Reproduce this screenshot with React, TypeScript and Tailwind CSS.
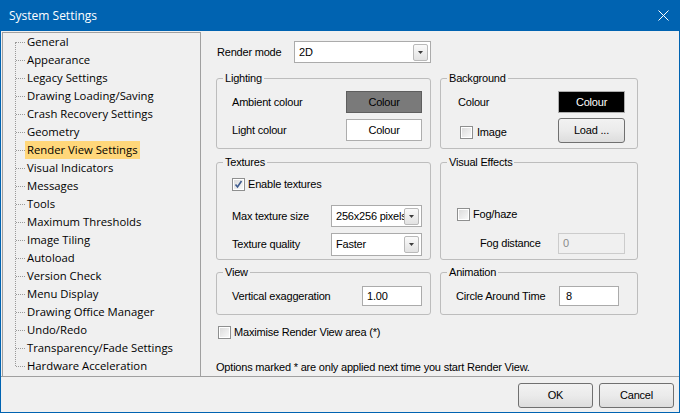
const treeItems = [
  "General",
  "Appearance",
  "Legacy Settings",
  "Drawing Loading/Saving",
  "Crash Recovery Settings",
  "Geometry",
  "Render View Settings",
  "Visual Indicators",
  "Messages",
  "Tools",
  "Maximum Thresholds",
  "Image Tiling",
  "Autoload",
  "Version Check",
  "Menu Display",
  "Drawing Office Manager",
  "Undo/Redo",
  "Transparency/Fade Settings",
  "Hardware Acceleration",
];

function Combo({ value, className }: { value: string; className: string }) {
  return (
    <div className={`${className} h-[22px] bg-white border border-[#ABABAB] flex items-center pl-[4px] pr-[2px]`}>
      <span className="flex-1 overflow-hidden whitespace-nowrap">{value}</span>
      <span className="w-[15px] h-[17px] shrink-0 rounded-[2px] border border-[#B9B9B9] bg-gradient-to-b from-[#FAFAFA] to-[#E2E2E2] flex items-center justify-center">
        <svg width="5" height="3" viewBox="0 0 5 3">
          <path d="M0 0h5L2.5 3z" fill="#3C3C3C" />
        </svg>
      </span>
    </div>
  );
}

function Check({ checked = false }: { checked?: boolean }) {
  return (
    <span className="w-[13px] h-[13px] border border-[#8E8F8F] bg-white p-px shrink-0">
      <span className="block w-full h-full bg-gradient-to-br from-[#DCDCDC] to-[#F8F8F8] relative">
        {checked && (
          <svg className="absolute left-0 top-0" width="9" height="9" viewBox="0 0 9 9">
            <path d="M1.5 4.5l2 2.5 4-6" fill="none" stroke="#3E5B8E" strokeWidth="1.6" />
          </svg>
        )}
      </span>
    </span>
  );
}

function Group({ title, className, children }: { title: string; className: string; children: React.ReactNode }) {
  return (
    <div className={`${className} relative border border-[#BDBDBD] rounded-[3px]`}>
      <span className="absolute -top-[8px] left-[6px] px-[2px] bg-[#F0F0F0] leading-[14px]">{title}</span>
      {children}
    </div>
  );
}

function WinButton({ label, className }: { label: string; className: string }) {
  return (
    <button className={`${className} h-[25px] rounded-[3px] border border-[#707070] bg-gradient-to-b from-[#F2F2F2] via-[#EBEBEB] to-[#DDDDDD] text-black flex items-center justify-center`}>
      {label}
    </button>
  );
}

export default function App() {
  return (
    <div className="w-[680px] h-[413px] bg-[#0063B1] flex flex-col px-px pb-px font-['Liberation_Sans',Arial,sans-serif] text-[11px] tracking-[-0.2px] text-black">
      {/* title bar */}
      <div className="h-[31px] shrink-0 flex items-center pl-[8px] pr-[10px] text-white text-[12px] tracking-normal font-['Open_Sans',sans-serif]">
        <span className="flex-1">System Settings</span>
        <svg width="11" height="11" viewBox="0 0 11 11">
          <path d="M0.5 0.5l10 10M10.5 0.5l-10 10" stroke="#fff" strokeWidth="1" />
        </svg>
      </div>

      <div className="flex-1 bg-[#F0F0F0] flex flex-col">
        <div className="flex h-[345px]">
          {/* tree */}
          <div className="ml-px mt-px w-[199px] h-[344px] border-l border-t border-r border-[#A0A0A0] bg-[#F0F0F0] relative font-['Open_Sans',sans-serif] text-[11.3px] tracking-normal">
            <div className="absolute left-[12px] top-[9px] bottom-[10px] border-l border-dotted border-[#9A9A9A]" />
            <ul>
              {treeItems.map((item) => (
                <li key={item} className="h-[18px] flex items-center pl-[13px]">
                  <span className="w-[9px] border-t border-dotted border-[#9A9A9A]" />
                  <span
                    className={`h-[18px] flex items-center px-[2px] leading-none ${
                      item === "Render View Settings" ? "bg-[#FFD77A]" : ""
                    }`}
                  >
                    {item}
                  </span>
                </li>
              ))}
            </ul>
          </div>

          {/* settings page */}
          <div className="flex-1 pl-[15px] pt-[10px] flex flex-col">
            <div className="flex items-center h-[22px]">
              <span className="w-[78px] pl-px">Render mode</span>
              <Combo value="2D" className="w-[137px]" />
            </div>

            <div className="flex gap-[9px] mt-[15px]">
              <Group title="Lighting" className="w-[215px] h-[71px] pt-[12px] pl-[15px] pr-[8px]">
                <div className="flex items-center justify-between h-[22px]">
                  <span>Ambient colour</span>
                  <span className="w-[76px] h-[22px] bg-[#7A7A7A] border border-[#5E5E5E] flex items-center justify-center">Colour</span>
                </div>
                <div className="flex items-center justify-between h-[22px] mt-[6px]">
                  <span>Light colour</span>
                  <span className="w-[76px] h-[22px] bg-white border border-[#ADADAD] flex items-center justify-center">Colour</span>
                </div>
              </Group>
              <Group title="Background" className="w-[198px] h-[71px] pt-[12px] pl-[17px] pr-[12px]">
                <div className="flex items-center justify-between h-[22px]">
                  <span>Colour</span>
                  <span className="w-[67px] h-[22px] bg-black border border-[#ADADAD] text-white flex items-center justify-center">Colour</span>
                </div>
                <div className="flex items-center justify-between h-[23px] mt-[6px]">
                  <span className="flex items-center gap-[4px] pl-[2px] pt-[4px]">
                    <Check />
                    Image
                  </span>
                  <WinButton label="Load ..." className="w-[67px] h-[23px]" />
                </div>
              </Group>
            </div>

            <div className="flex gap-[9px] mt-[13px]">
              <Group title="Textures" className="w-[215px] h-[98px] pt-[15px] pl-[15px] pr-[8px]">
                <span className="flex items-center gap-[3px] h-[13px]">
                  <Check checked />
                  Enable textures
                </span>
                <div className="flex items-center justify-between h-[22px] mt-[14px]">
                  <span>Max texture size</span>
                  <Combo value="256x256 pixels" className="w-[91px]" />
                </div>
                <div className="flex items-center justify-between h-[23px] mt-[6px]">
                  <span>Texture quality</span>
                  <Combo value="Faster" className="w-[91px] h-[23px]" />
                </div>
              </Group>
              <Group title="Visual Effects" className="w-[198px] h-[98px] pt-[45px] pl-[16px] pr-[12px]">
                <span className="flex items-center gap-[3px] h-[13px]">
                  <Check />
                  Fog/haze
                </span>
                <div className="flex items-center justify-between h-[21px] mt-[12px] pl-[23px]">
                  <span>Fog distance</span>
                  <span className="w-[67px] h-[21px] border border-[#CCCCCC] bg-[#F0F0F0] text-[#8A8A8A] flex items-center pl-[4px]">0</span>
                </div>
              </Group>
            </div>

            <div className="flex gap-[9px] mt-[12px]">
              <Group title="View" className="w-[215px] h-[43px] pt-[13px] pl-[15px] pr-[8px]">
                <div className="flex items-center justify-between h-[20px]">
                  <span>Vertical exaggeration</span>
                  <span className="w-[60px] h-[20px] bg-white border border-[#ABABAB] flex items-center pl-[4px]">1.00</span>
                </div>
              </Group>
              <Group title="Animation" className="w-[198px] h-[43px] pt-[13px] pl-[15px] pr-[18px]">
                <div className="flex items-center justify-between h-[20px]">
                  <span>Circle Around Time</span>
                  <span className="w-[60px] h-[20px] bg-white border border-[#ABABAB] flex items-center pl-[6px]">8</span>
                </div>
              </Group>
            </div>

            <span className="flex items-center gap-[3px] h-[13px] mt-[11px] pl-[2px]">
              <Check />
              Maximise Render View area (*)
            </span>

            <p className="mt-[21px] leading-[14px]">Options marked * are only applied next time you start Render View.</p>
          </div>
        </div>

        {/* footer */}
        <div className="flex-1 border-t border-[#A0A0A0] flex justify-end items-start gap-[6px] pt-[6px] pr-[5px]">
          <WinButton label="OK" className="w-[75px]" />
          <WinButton label="Cancel" className="w-[75px]" />
        </div>
      </div>
    </div>
  );
}
